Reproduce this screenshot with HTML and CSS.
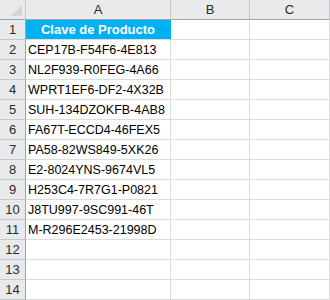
FILE: index.html
```html
<!DOCTYPE html>
<html lang="es">
<head>
    <meta charset="UTF-8">
    <title>Clave de Producto</title>
    <link rel="stylesheet" href="styles.css">
</head>
<body>
    <div class="sheet">
        <div class="hdr corner"><span class="tri"></span></div>
        <div class="hdr col">A</div>
        <div class="hdr col">B</div>
        <div class="hdr col">C</div>

        <div class="hdr num">1</div><div class="cell title">Clave de Producto</div><div class="cell"></div><div class="cell"></div>
        <div class="hdr num">2</div><div class="cell">CEP17B-F54F6-4E813</div><div class="cell"></div><div class="cell"></div>
        <div class="hdr num">3</div><div class="cell">NL2F939-R0FEG-4A66</div><div class="cell"></div><div class="cell"></div>
        <div class="hdr num">4</div><div class="cell">WPRT1EF6-DF2-4X32B</div><div class="cell"></div><div class="cell"></div>
        <div class="hdr num">5</div><div class="cell">SUH-134DZOKFB-4AB8</div><div class="cell"></div><div class="cell"></div>
        <div class="hdr num">6</div><div class="cell">FA67T-ECCD4-46FEX5</div><div class="cell"></div><div class="cell"></div>
        <div class="hdr num">7</div><div class="cell">PA58-82WS849-5XK26</div><div class="cell"></div><div class="cell"></div>
        <div class="hdr num">8</div><div class="cell">E2-8024YNS-9674VL5</div><div class="cell"></div><div class="cell"></div>
        <div class="hdr num">9</div><div class="cell">H253C4-7R7G1-P0821</div><div class="cell"></div><div class="cell"></div>
        <div class="hdr num">10</div><div class="cell">J8TU997-9SC991-46T</div><div class="cell"></div><div class="cell"></div>
        <div class="hdr num">11</div><div class="cell">M-R296E2453-21998D</div><div class="cell"></div><div class="cell"></div>
        <div class="hdr num">12</div><div class="cell"></div><div class="cell"></div><div class="cell"></div>
        <div class="hdr num">13</div><div class="cell"></div><div class="cell"></div><div class="cell"></div>
        <div class="hdr num">14</div><div class="cell"></div><div class="cell"></div><div class="cell"></div>
    </div>
</body>
</html>
```

FILE: styles.css
```css
body {
    margin: 0;
    background-color: #fff;
    font-family: "Liberation Sans", Arial, sans-serif;
    font-size: 12.5px;
    color: #000;
}
.sheet {
    display: grid;
    grid-template-columns: 26px 145px 79px 80px;
    grid-auto-rows: 20px;
    width: 330px;
}
.hdr {
    background-color: #e9eaec;
    border-right: 1px solid #c5c8cc;
    border-bottom: 1px solid #c5c8cc;
    box-sizing: border-box;
    color: #2b2b2b;
    font-size: 13px;
    display: flex;
    align-items: center;
    justify-content: center;
}
.col {
    border-bottom-color: #9fa3a8;
}
.num {
    border-right-color: #9fa3a8;
    border-bottom-color: #c5c8cc;
}
.corner {
    position: relative;
    border-right-color: #c5c8cc;
    border-bottom-color: #9fa3a8;
}
.tri {
    position: absolute;
    right: 3px;
    bottom: 3px;
    width: 0;
    height: 0;
    border-left: 11px solid transparent;
    border-bottom: 11px solid #d2d4d7;
}
.cell {
    border-right: 1px solid #dadcdd;
    border-bottom: 1px solid #dadcdd;
    box-sizing: border-box;
    padding-left: 2px;
    display: flex;
    align-items: center;
    white-space: nowrap;
}
.title {
    background-color: #00b0f0;
    color: #fff;
    font-size: 13px;
    font-weight: bold;
    justify-content: center;
    padding-left: 0;
    border-right-color: #00b0f0;
}
```
